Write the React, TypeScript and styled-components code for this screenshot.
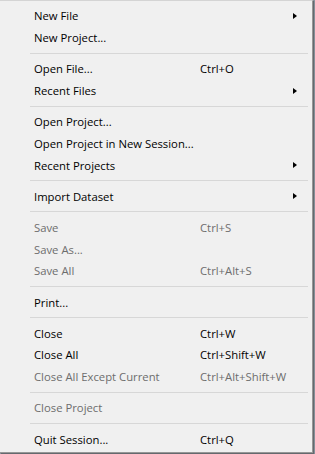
import React from "react";
import styled, { createGlobalStyle } from "styled-components";

const Global = createGlobalStyle`
  html, body { margin: 0; padding: 0; }
  body {
    background: #8d97a1;
    width: 315px;
    height: 454px;
    overflow: hidden;
  }
`;

const Menu = styled.div`
  box-sizing: border-box;
  width: 313px;
  height: 453px;
  background: #f0f0f0;
  border-top: 1px solid #d4d4d4;
  border-right: 1px solid #979797;
  border-bottom: 1px solid #979797;
  padding-top: 4px;
  font-family: "Open Sans", "Noto Sans", sans-serif;
  font-size: 11.3px;
  color: #000;
  box-shadow: 1px 1px 1px rgba(60, 60, 60, 0.5);
`;

const Row = styled.div<{ $disabled?: boolean }>`
  display: grid;
  grid-template-columns: 34px 166px 93px 1fr;
  align-items: center;
  height: 21.75px;
  color: ${(p) => (p.$disabled ? "#6d6d6d" : "#000")};
  white-space: nowrap;
`;

const Label = styled.span`
  grid-column: 2;
`;

const Shortcut = styled.span`
  grid-column: 3;
`;

const Arrow = styled.span`
  grid-column: 4;
  width: 0;
  height: 0;
  border-top: 3.5px solid transparent;
  border-bottom: 3.5px solid transparent;
  border-left: 4px solid #000;
`;

const Separator = styled.div`
  height: 9.4px;
  display: flex;
  align-items: center;
  padding-left: 30px;
  padding-right: 4px;
  &::after {
    content: "";
    flex: 1;
    height: 1px;
    background: #d7d7d7;
  }
`;

type Item = { label: string; shortcut?: string; sub?: boolean; disabled?: boolean } | "sep";

const items: Item[] = [
  { label: "New File", sub: true },
  { label: "New Project..." },
  "sep",
  { label: "Open File...", shortcut: "Ctrl+O" },
  { label: "Recent Files", sub: true },
  "sep",
  { label: "Open Project..." },
  { label: "Open Project in New Session..." },
  { label: "Recent Projects", sub: true },
  "sep",
  { label: "Import Dataset", sub: true },
  "sep",
  { label: "Save", shortcut: "Ctrl+S", disabled: true },
  { label: "Save As...", disabled: true },
  { label: "Save All", shortcut: "Ctrl+Alt+S", disabled: true },
  "sep",
  { label: "Print..." },
  "sep",
  { label: "Close", shortcut: "Ctrl+W" },
  { label: "Close All", shortcut: "Ctrl+Shift+W" },
  { label: "Close All Except Current", shortcut: "Ctrl+Alt+Shift+W", disabled: true },
  "sep",
  { label: "Close Project", disabled: true },
  "sep",
  { label: "Quit Session...", shortcut: "Ctrl+Q" },
];

export default function App() {
  return (
    <>
      <Global />
      <Menu>
        {items.map((it, i) =>
          it === "sep" ? (
            <Separator key={i} />
          ) : (
            <Row key={i} $disabled={it.disabled}>
              <Label>{it.label}</Label>
              {it.shortcut && <Shortcut>{it.shortcut}</Shortcut>}
              {it.sub && <Arrow />}
            </Row>
          )
        )}
      </Menu>
    </>
  );
}
